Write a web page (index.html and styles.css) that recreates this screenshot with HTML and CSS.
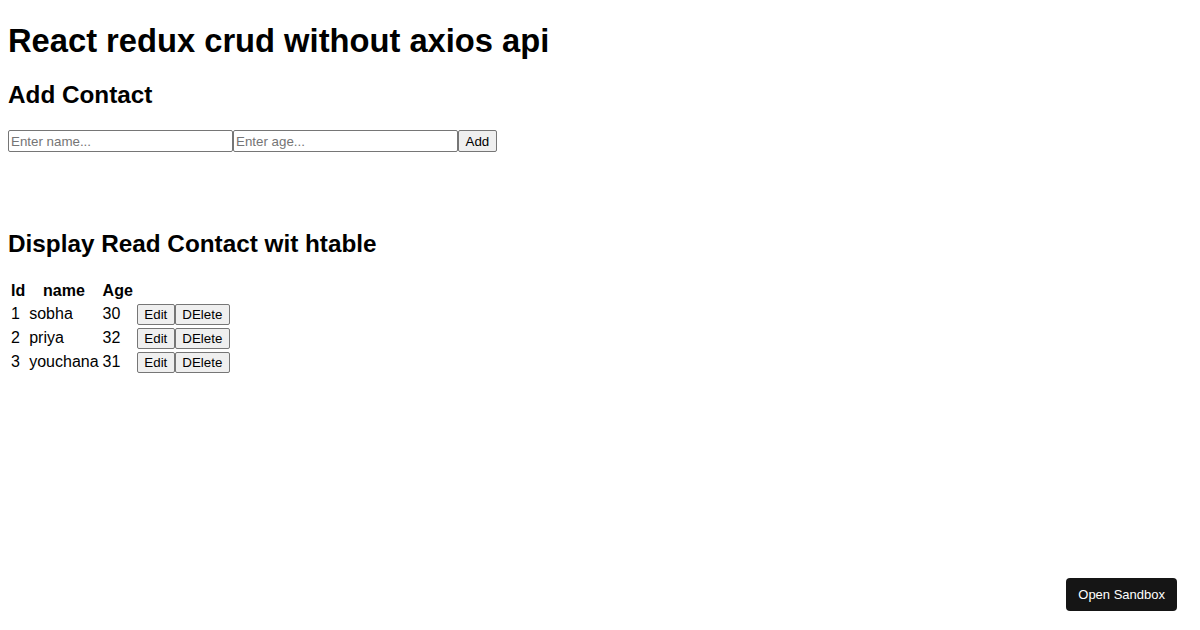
FILE: index.html
```html
<!DOCTYPE html>
<html lang="en">
<head>
  <meta charset="UTF-8">
  <meta name="viewport" content="width=device-width, initial-scale=1.0">
  <title>React redux crud</title>
  <link rel="stylesheet" href="styles.css">
</head>
<body>
  <div class="app">
    <h1>React redux crud without axios api</h1>

    <h2>Add Contact</h2>
    <form class="add-form"><input class="text-input" type="text" placeholder="Enter name..."><input class="text-input" type="text" placeholder="Enter age..."><button class="btn" type="button">Add</button></form>

    <h2 class="table-title">Display Read Contact wit htable</h2>
    <table class="contact-table">
      <thead>
        <tr>
          <th>Id</th>
          <th>name</th>
          <th>Age</th>
        </tr>
      </thead>
      <tbody>
        <tr>
          <td>1</td>
          <td>sobha</td>
          <td>30</td>
          <td class="actions"><button class="btn">Edit</button><button class="btn">DElete</button></td>
        </tr>
        <tr>
          <td>2</td>
          <td>priya</td>
          <td>32</td>
          <td class="actions"><button class="btn">Edit</button><button class="btn">DElete</button></td>
        </tr>
        <tr>
          <td>3</td>
          <td>youchana</td>
          <td>31</td>
          <td class="actions"><button class="btn">Edit</button><button class="btn">DElete</button></td>
        </tr>
      </tbody>
    </table>
  </div>

  <a class="sandbox-link" href="#">Open Sandbox</a>
</body>
</html>
```

FILE: styles.css
```css
body {
  margin: 8px;
  font-family: "Liberation Sans", Arial, sans-serif;
  color: #000;
  background-color: #fff;
}
h1 {
  font-size: 32.7px;
  margin: 14px 0 21px;
}
h2 {
  font-size: 24.3px;
  margin: 20px 0;
}
.table-title {
  margin-bottom: 21px;
}
.add-form {
  display: flex;
  padding-top: 1px;
  margin-bottom: 78px;
}
.text-input {
  width: 225px;
  height: 22px;
  box-sizing: border-box;
  margin: 0;
  padding: 1px 2px;
  border: 1px solid #767676;
  border-radius: 2px;
  font-family: "Liberation Sans", Arial, sans-serif;
  font-size: 13.33px;
}
.text-input::placeholder {
  color: #757575;
}
.btn {
  height: 22px;
  margin: 0;
  padding: 1px 6.5px;
  border: 1px solid #767676;
  border-radius: 2px;
  background-color: #efefef;
  color: #000;
  font-family: "Liberation Sans", Arial, sans-serif;
  font-size: 13.33px;
}
.contact-table {
  border-spacing: 2px;
}
.contact-table th,
.contact-table td {
  padding: 1px;
  font-size: 16px;
  text-align: left;
}
.contact-table th {
  text-align: center;
}
.contact-table .actions {
  display: flex;
  padding: 1px 1px 0;
}
.actions .btn {
  height: 21px;
}
.sandbox-link {
  position: fixed;
  right: 23px;
  bottom: 19px;
  padding: 9px 12px;
  border-radius: 4px;
  background-color: #151515;
  color: #fff;
  font-size: 13px;
  text-decoration: none;
}
```
